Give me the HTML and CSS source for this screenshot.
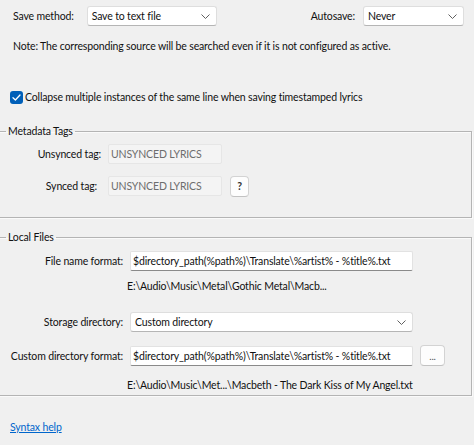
FILE: index.html
```html
<!DOCTYPE html>
<html>
<head>
<meta charset="utf-8">
<link rel="stylesheet" href="styles.css">
</head>
<body>
<div class="page">
  <div class="row-top">
    <div class="pair">
      <span class="lbl lbl-method">Save method:</span>
      <div class="combo combo-method"><span>Save to text file</span><svg class="chev" width="9" height="5" viewBox="0 0 9 5"><path d="M0.5 0.5 L4.5 4.5 L8.5 0.5" fill="none" stroke="#606060" stroke-width="1"/></svg></div>
    </div>
    <div class="pair pair-auto">
      <span class="lbl">Autosave:</span>
      <div class="combo combo-auto"><span>Never</span><svg class="chev" width="9" height="5" viewBox="0 0 9 5"><path d="M0.5 0.5 L4.5 4.5 L8.5 0.5" fill="none" stroke="#606060" stroke-width="1"/></svg></div>
    </div>
  </div>

  <div class="note">Note: The corresponding source will be searched even if it is not configured as active.</div>

  <label class="check-row">
    <span class="checkbox"><svg width="13" height="13" viewBox="0 0 13 13"><path d="M3 6.8 L5.4 9 L10 4" fill="none" stroke="#fff" stroke-width="1.3" stroke-linecap="round" stroke-linejoin="round"/></svg></span>
    <span>Collapse multiple instances of the same line when saving timestamped lyrics</span>
  </label>

  <fieldset class="group group-meta">
    <legend>Metadata Tags</legend>
    <div class="frow">
      <span class="glbl glbl-meta">Unsynced tag:</span>
      <div class="tbox disabled">UNSYNCED LYRICS</div>
    </div>
    <div class="frow frow-synced">
      <span class="glbl glbl-meta glbl-synced">Synced tag:</span>
      <div class="tbox disabled">UNSYNCED LYRICS</div>
      <div class="btn btn-q">?</div>
    </div>
  </fieldset>

  <fieldset class="group group-local">
    <legend>Local Files</legend>
    <div class="frow">
      <span class="glbl glbl-local">File name format:</span>
      <div class="tbox wide">$directory_path(%path%)\Translate\%artist% - %title%.txt</div>
    </div>
    <div class="path path1">E:\Audio\Music\Metal\Gothic Metal\Macb...</div>
    <div class="frow frow-storage">
      <span class="glbl glbl-local">Storage directory:</span>
      <div class="combo combo-wide"><span>Custom directory</span><svg class="chev" width="9" height="5" viewBox="0 0 9 5"><path d="M0.5 0.5 L4.5 4.5 L8.5 0.5" fill="none" stroke="#606060" stroke-width="1"/></svg></div>
    </div>
    <div class="frow frow-custom">
      <span class="glbl glbl-local">Custom directory format:</span>
      <div class="tbox wide">$directory_path(%path%)\Translate\%artist% - %title%.txt</div>
      <div class="btn btn-dots">...</div>
    </div>
    <div class="path path2">E:\Audio\Music\Met...\Macbeth - The Dark Kiss of My Angel.txt</div>
  </fieldset>

  <a class="link" href="#">Syntax help</a>
</div>
</body>
</html>
```

FILE: styles.css
```css
html, body {
  margin: 0;
  padding: 0;
  background: #f0f0f0;
}
body {
  font-family: Lato, "Liberation Sans", sans-serif;
  font-size: 10.5px;
  letter-spacing: -0.15px;
  color: #111;
  overflow: hidden;
}
.page {
  width: 474px;
  height: 445px;
}
.row-top {
  display: flex;
  align-items: center;
  margin-top: 6px;
  height: 20px;
  padding-left: 13px;
  padding-right: 10px;
}
.pair {
  display: flex;
  align-items: center;
}
.pair-auto {
  margin-left: auto;
}
.lbl {
  margin-right: 8px;
  line-height: 16px;
}
.lbl-method { margin-right: 13px; }
.combo {
  box-sizing: border-box;
  height: 20px;
  background: #fff;
  border: 1px solid #dedede;
  border-bottom-color: #b5b5b5;
  border-radius: 3px;
  display: flex;
  align-items: center;
  justify-content: space-between;
  padding: 0 6px 0 4px;
  line-height: 16px;
}
.combo-method { width: 130px; }
.combo-auto { width: 101px; }
.combo-wide { width: 283px; }
.chev { display: block; }

.note {
  margin-top: 12px;
  padding-left: 13px;
  line-height: 16px;
}
.check-row {
  display: flex;
  align-items: center;
  margin-top: 35px;
  padding-left: 10px;
  line-height: 16px;
  gap: 2px;
}
.checkbox {
  width: 13px;
  height: 13px;
  border-radius: 3px;
  background: #005fb8;
  display: block;
}
.checkbox svg { display: block; }

.group {
  margin: 0 2px 0 -2px;
  padding: 0;
  border: 1px solid #b4b4b4;
  box-shadow: inset 1px 1px 0 #fafafa, 1px 1px 0 #fafafa;
  min-width: 0;
}
.group legend {
  padding: 0 2px;
  margin-left: 7px;
  line-height: 16px;
}
.group-meta {
  margin-top: 18px;
  padding: 5px 0 21px 0;
}
.group-local {
  margin-top: 11px;
  padding: 6px 0 2px 0;
}
.frow {
  display: flex;
  align-items: center;
  min-height: 20px;
}
.frow-synced { margin-top: 12px; height: 20px; }
.frow-storage { margin-top: 18px; }
.frow-custom { margin-top: 13px; }
.glbl {
  flex: none;
  text-align: right;
  line-height: 16px;
  white-space: nowrap;
  box-sizing: border-box;
  margin-right: 7px;
}
.glbl-meta { width: 102px; }
.glbl-synced { padding-right: 4px; }
.glbl-local { width: 124px; }
.tbox {
  box-sizing: border-box;
  height: 20px;
  width: 114px;
  background: #fff;
  border: 1px solid #e2e2e2;
  border-bottom-color: #8a8a8a;
  border-radius: 2px;
  padding: 0 2px;
  line-height: 18px;
  white-space: nowrap;
  overflow: hidden;
}
.tbox.disabled {
  background: #f4f4f4;
  border-color: #e6e6e6;
  color: #6d6d6d;
}
.tbox.wide { width: 283px; }
.btn {
  box-sizing: border-box;
  background: #fdfdfd;
  border: 1px solid #d3d3d3;
  border-bottom-color: #c2c2c2;
  border-radius: 4px;
  display: flex;
  align-items: center;
  justify-content: center;
  flex: none;
}
.btn-q {
  width: 19px;
  height: 21px;
  margin-left: 8px;
  font-weight: bold;
  color: #333;
}
.btn-dots {
  width: 25px;
  height: 21px;
  margin-left: 7px;
  color: #555;
  font-size: 10px;
}
.path {
  padding-left: 128px;
  line-height: 16px;
  white-space: nowrap;
}
.path1 { margin-top: 7px; }
.path2 { margin-top: 11px; }

.link {
  display: inline-block;
  margin-top: 23px;
  margin-left: 10px;
  color: #0066cc;
  text-decoration: underline;
  line-height: 16px;
}
```
